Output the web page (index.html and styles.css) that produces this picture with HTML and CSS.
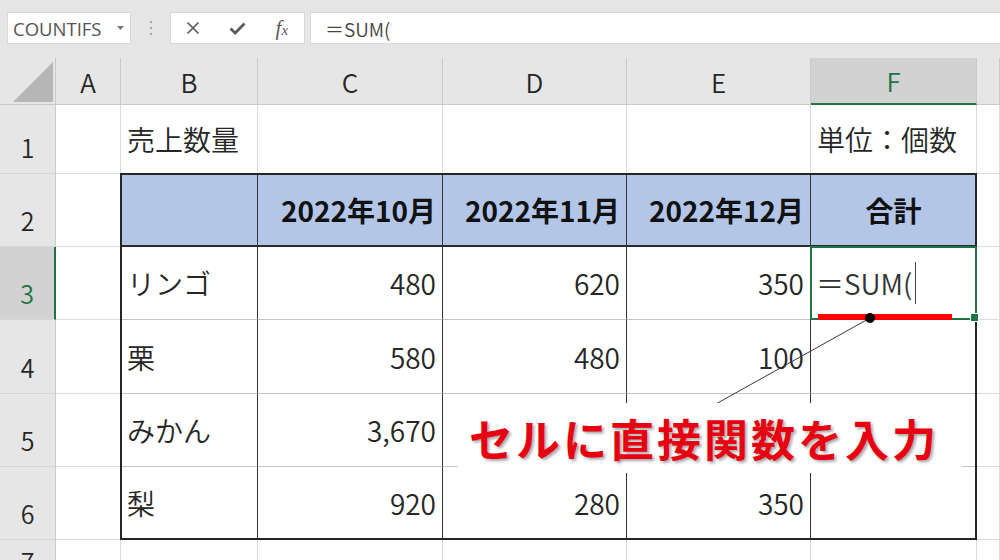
FILE: index.html
```html
<!DOCTYPE html>
<html lang="ja">
<head>
<meta charset="utf-8">
<title>Excel SUM</title>
<link rel="stylesheet" href="styles.css">
</head>
<body>
<div class="topbar">
  <div class="namebox"><span>COUNTIFS</span><svg width="7" height="4" viewBox="0 0 7 4"><path d="M0 0H7L3.5 4z" fill="#777"/></svg></div>
  <div class="sep"><svg width="4" height="16" viewBox="0 0 4 16"><circle cx="2" cy="2" r="1.2" fill="#a8a8a8"/><circle cx="2" cy="8" r="1.2" fill="#a8a8a8"/><circle cx="2" cy="14" r="1.2" fill="#a8a8a8"/></svg></div>
  <div class="btns">
    <span class="btn"><svg width="14" height="14" viewBox="0 0 14 14"><path d="M1.5 1.5L12.5 12.5M12.5 1.5L1.5 12.5" stroke="#5a5a5a" stroke-width="1.7" fill="none"/></svg></span>
    <span class="btn"><svg width="17" height="13" viewBox="0 0 17 13"><path d="M1.5 6.5L6.2 11L15.5 1.5" stroke="#5a5a5a" stroke-width="2.7" fill="none"/></svg></span>
    <span class="btn fx">f<span class="fxx">x</span></span>
  </div>
  <div class="formula">＝SUM(</div>
</div>

<div class="sheetwrap">
  <div class="sheet">
    <div class="corner"><svg width="56" height="47" viewBox="0 0 56 47"><path d="M53 4V44H13z" fill="#b6b6b6"/></svg></div>
    <div class="ch">A</div><div class="ch">B</div><div class="ch">C</div><div class="ch">D</div><div class="ch">E</div><div class="ch sel">F</div><div class="ch"></div>

    <div class="rh">1</div><div class="c"></div><div class="c">売上数量</div><div class="c"></div><div class="c"></div><div class="c"></div><div class="c">単位：個数</div><div class="c"></div>

    <div class="rh">2</div><div class="c"></div><div class="c t th"></div><div class="c t th r">2022年10月</div><div class="c t th r">2022年11月</div><div class="c t th r">2022年12月</div><div class="c t th ctr">合計</div><div class="c"></div>

    <div class="rh sel">3</div><div class="c"></div><div class="c t">リンゴ</div><div class="c t r">480</div><div class="c t r">620</div><div class="c t r">350</div><div class="c t edit">＝SUM(<span class="caret"></span></div><div class="c"></div>

    <div class="rh">4</div><div class="c"></div><div class="c t">栗</div><div class="c t r">580</div><div class="c t r">480</div><div class="c t r">100</div><div class="c t"></div><div class="c"></div>

    <div class="rh">5</div><div class="c"></div><div class="c t">みかん</div><div class="c t r">3,670</div><div class="c t r"></div><div class="c t r"></div><div class="c t"></div><div class="c"></div>

    <div class="rh">6</div><div class="c"></div><div class="c t">梨</div><div class="c t r">920</div><div class="c t r">280</div><div class="c t r">350</div><div class="c t"></div><div class="c"></div>

    <div class="rh last">7</div><div class="c"></div><div class="c"></div><div class="c"></div><div class="c"></div><div class="c"></div><div class="c"></div><div class="c"></div>
  </div>
  <div class="layer">
    <div class="tblborder"></div>
    <div class="selbox"></div>
  </div>
</div>

<svg class="annot" width="1000" height="560" viewBox="0 0 1000 560">
  <line x1="870" y1="318" x2="714" y2="405" stroke="#3a3a3a" stroke-width="1"/>
  <rect x="818" y="314" width="134" height="6" fill="#ff0000"/>
  <circle cx="870" cy="318" r="5" fill="#000"/>
</svg>
<div class="callout">セルに直接関数を入力</div>
</body>
</html>
```

FILE: styles.css
```css
* { box-sizing: border-box; }
html, body { margin: 0; padding: 0; }
body {
  width: 1000px;
  height: 560px;
  overflow: hidden;
  background: #fff;
  position: relative;
  font-family: "Noto Sans CJK JP", "Noto Sans", sans-serif;
  color: #222;
}

.topbar {
  height: 58px;
  background: #e6e6e6;
  display: flex;
  align-items: flex-start;
  padding: 12px 0 0 7px;
}
.namebox {
  width: 124px;
  height: 32px;
  background: #fff;
  border: 1px solid #d8d8d8;
  display: flex;
  align-items: center;
  justify-content: space-between;
  padding: 0 6px 0 5px;
  font-family: "Open Sans", "Noto Sans", sans-serif;
  font-size: 18.5px;
  color: #555;
}
.sep {
  width: 39px;
  height: 32px;
  display: flex;
  align-items: center;
  justify-content: center;
}
.btns {
  width: 135px;
  height: 32px;
  background: #fff;
  border: 1px solid #d8d8d8;
  display: flex;
  align-items: center;
}
.btn {
  width: 45px;
  display: flex;
  align-items: center;
  justify-content: center;
}
.fx {
  font-family: "Liberation Serif", serif;
  font-style: italic;
  font-size: 21px;
  color: #5a5a5a;
  line-height: 1;
}
.fxx { font-size: 15px; position: relative; top: 2px; }
.formula {
  flex: 1;
  margin-left: 5px;
  height: 32px;
  background: #fff;
  border: 1px solid #d8d8d8;
  border-right: none;
  padding-left: 14px;
  display: flex;
  align-items: center;
  font-size: 19px;
  font-weight: 350;
  color: #444;
}

.sheetwrap { position: relative; height: 502px; }
.sheet, .layer {
  display: grid;
  grid-template-columns: 56px 65px 137px 185px 184px 184px 166px 1fr;
  grid-template-rows: 47px 69px 73px 73px 74px 73px 73px 1fr;
  height: 502px;
}
.layer { position: absolute; inset: 0; pointer-events: none; }

.corner {
  background: #e6e6e6;
  border-right: 1px solid #c9c9c9;
  border-bottom: 1px solid #c9c9c9;
}
.corner svg { display: block; }
.ch {
  background: #e6e6e6;
  border-right: 1px solid #c9c9c9;
  border-bottom: 1px solid #c9c9c9;
  display: flex;
  align-items: center;
  justify-content: center;
  font-size: 26px;
  font-weight: 350;
  color: #262626;
}
.ch.sel {
  background: #d2d2d2;
  color: #217346;
  border-bottom: 2px solid #217346;
}
.rh {
  background: #e6e6e6;
  border-right: 1px solid #c9c9c9;
  border-bottom: 1px solid #d6d6d6;
  display: flex;
  align-items: flex-end;
  justify-content: center;
  padding-bottom: 13px;
  font-size: 25px;
  font-weight: 350;
  line-height: 25px;
  color: #262626;
}
.rh.sel {
  background: #d2d2d2;
  color: #217346;
  border-right: 2px solid #217346;
}
.rh.last { align-items: flex-start; padding: 9px 0 0; }

.c {
  border-right: 1px solid #dcdcdc;
  border-bottom: 1px solid #dcdcdc;
  display: flex;
  align-items: center;
  padding: 0 6px;
  font-size: 28px;
  font-weight: 350;
  white-space: nowrap;
  color: #262626;
}
.c.t {
  border-right: 1px solid #333;
  border-bottom: 1px solid #c4c4c4;
}
.c.th {
  background: #b4c6e7;
  font-weight: 700;
  font-size: 28px;
  color: #111;
  border-bottom: 2px solid #2b2b2b;
}
.r { justify-content: flex-end; }
.ctr { justify-content: center; }
.edit { padding-left: 5px; color: #333; font-size: 28px; }
.caret {
  display: inline-block;
  width: 1px;
  height: 42px;
  background: #444;
  margin-left: 3px;
}

.tblborder {
  grid-column: 3 / 8;
  grid-row: 3 / 8;
  margin: -1px 0 0 -1px;
  border: 2px solid #262626;
}
.selbox {
  grid-column: 7 / 8;
  grid-row: 4 / 5;
  margin: -1px 0 0 -1px;
  border: 2px solid #217346;
  position: relative;
}
.selbox::after {
  content: "";
  position: absolute;
  right: -4px;
  bottom: -4px;
  width: 7px;
  height: 7px;
  background: #217346;
  border: 1px solid #fff;
}

.annot { position: absolute; left: 0; top: 0; pointer-events: none; }
.callout {
  position: absolute;
  left: 458px;
  top: 403px;
  width: 504px;
  height: 70px;
  background: #fff;
  display: flex;
  align-items: center;
  padding-left: 11px;
  font-size: 44px;
  font-weight: 700;
  letter-spacing: 3px;
  color: #e60012;
  white-space: nowrap;
  text-shadow: 2px 2px 3px rgba(0, 0, 0, 0.35);
}
```
